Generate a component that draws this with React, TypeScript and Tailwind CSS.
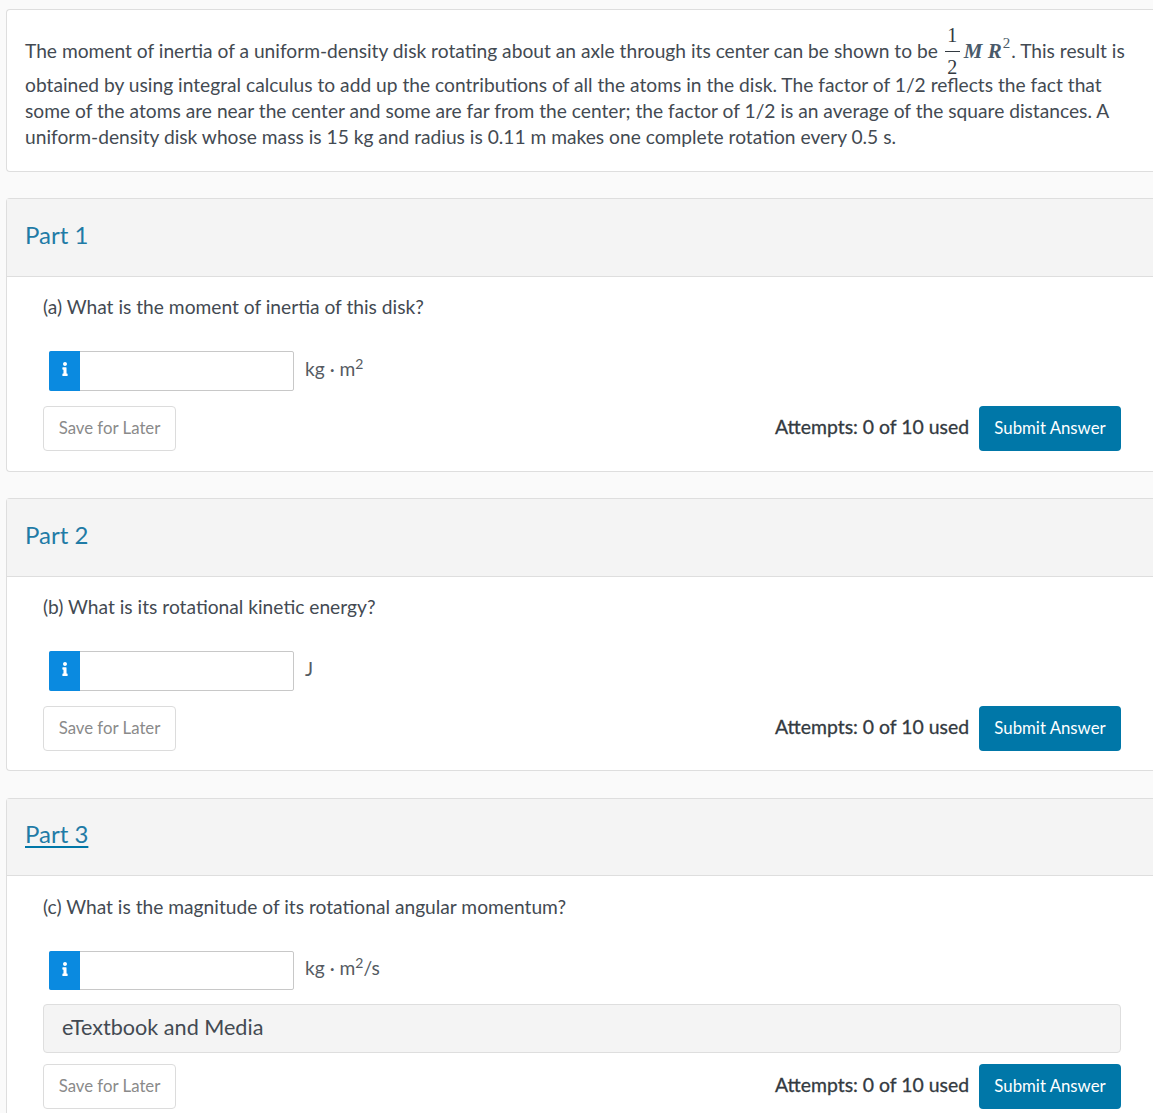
import type { ReactNode } from "react";
import { FaInfo } from "react-icons/fa";

interface PartProps {
  title: string;
  question: string;
  unit: ReactNode;
  underlined?: boolean;
  media?: boolean;
  className: string;
}

function AnswerActions() {
  return (
    <div className="flex items-start justify-between">
      <button className="h-[45px] w-[133px] rounded-[4px] border border-[#dcdcdc] bg-white pb-[2px] text-[16.8px] text-[#8a8a8a]">
        Save for Later
      </button>
      <div className="flex items-start gap-[10px]">
        <span className="mt-[7px] text-[19.4px] leading-[28px] text-[#333a41] [-webkit-text-stroke:0.3px_#333a41]">Attempts: 0 of 10 used</span>
        <button className="h-[45px] w-[142px] rounded-[4px] bg-[#0077a8] pb-[2px] text-[16.8px] text-white">
          Submit Answer
        </button>
      </div>
    </div>
  );
}

function Part({ title, question, unit, underlined, media, className }: PartProps) {
  return (
    <section className={`rounded-l-[4px] border border-r-0 border-[#dedede] bg-white ${className}`}>
      <header className={`flex items-center border-b border-[#dedede] bg-[#f4f4f4] pb-[6px] pl-[18px] ${media ? "h-[77px]" : "h-[78px]"}`}>
        <h2 className={`text-[24px] leading-[32px] text-[#1f7ba6] ${underlined ? "underline decoration-[#0077a8] decoration-2 underline-offset-[3px]" : ""}`}>
          {title}
        </h2>
      </header>
      <div className="pr-[32px] pl-[36px]">
        <p className={`text-[19.2px] leading-[28px] text-[#434a52] ${media ? "mt-[17px]" : "mt-[16px]"}`}>{question}</p>
        <div className="mt-[30px] ml-[6px] flex items-start">
          <div className={`flex w-[245px] rounded-[2px] border border-[#c8c8c8] ${media ? "h-[39px]" : "h-[40px]"}`}>
            <span className="-my-px -ml-px flex w-[31px] items-center justify-center rounded-l-[2px] bg-[#0a8ae0] pb-[4px] text-white">
              <FaInfo className="size-[14px]" />
            </span>
          </div>
          <span className={`ml-[11px] text-[19.2px] leading-[28px] text-[#555b62] ${media ? "mt-[3px]" : "mt-[4px]"}`}>{unit}</span>
        </div>
        {media ? (
          <div className="mt-[14px] flex h-[49px] items-center rounded-[4px] border border-[#dedede] bg-[#f4f4f4] pb-[2px] pl-[18px] text-[21.6px] text-[#434a52]">
            eTextbook and Media
          </div>
        ) : null}
        <div className={media ? "mt-[11px]" : "mt-[15px]"}>
          <AnswerActions />
        </div>
      </div>
    </section>
  );
}

function Fraction() {
  return (
    <span className="mr-[4px] ml-[7px] inline-flex w-[15px] flex-col items-center font-['Liberation_Serif',serif] text-[20px] text-[#333a41]">
      <span className="w-full border-b border-[#333a41] pb-[9px] text-center leading-[14px]">1</span>
      <span className="pt-[8px] leading-[14px]">2</span>
    </span>
  );
}

export default function App() {
  return (
    <div className="h-[1113px] overflow-hidden bg-[#fafafa] pt-[9px] pl-[6px] font-['Lato',sans-serif]">
      <section className="h-[163px] rounded-l-[4px] border border-r-0 border-[#dedede] bg-white pt-[19px] pl-[18px] text-[19.2px] leading-[26px] text-[#434a52]">
        <p className="w-[1115px]">
          <span className="flex h-[43px] items-center whitespace-nowrap">
            The moment of inertia of a uniform-density disk rotating about an axle through its center can be shown to be
            <Fraction />
            <span className="font-['Liberation_Serif',serif] text-[21px] font-bold text-[#4a5a6a] italic">
              M R<sup className="-top-[10px] ml-[1px] text-[15px] leading-none font-normal not-italic">2</sup>
            </span>
            <span className="ml-[1px]">. This result is</span>
          </span>
          obtained by using integral calculus to add up the contributions of all the atoms in the disk. The factor of 1/2 reflects the fact that some of the atoms are near the center and some are far from the center; the factor of 1/2 is an average of the square distances. A uniform-density disk whose mass is 15 kg and radius is 0.11 m makes one complete rotation every 0.5 s.
        </p>
      </section>
      <Part
        className="mt-[26px] h-[274px]"
        title="Part 1"
        question="(a) What is the moment of inertia of this disk?"
        unit={<>kg · m<sup className="text-[14px]">2</sup></>}
      />
      <Part
        className="mt-[26px] h-[273px]"
        title="Part 2"
        question="(b) What is its rotational kinetic energy?"
        unit="J"
      />
      <Part
        className="mt-[27px] h-[340px]"
        title="Part 3"
        underlined
        media
        question="(c) What is the magnitude of its rotational angular momentum?"
        unit={<>kg · m<sup className="text-[14px]">2</sup>/s</>}
      />
    </div>
  );
}
